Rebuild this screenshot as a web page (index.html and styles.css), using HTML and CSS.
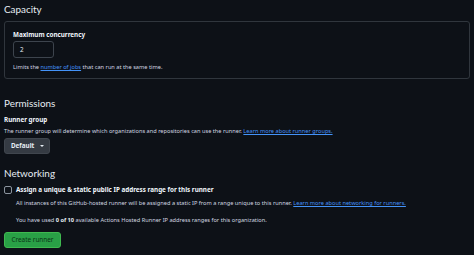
FILE: index.html
```html
<!DOCTYPE html>
<html>
<head>
<meta charset="utf-8">
<link rel="stylesheet" href="styles.css">
</head>
<body>
<div class="page">
  <h2 class="heading">Capacity</h2>
  <div class="box">
    <div class="label">Maximum concurrency</div>
    <div class="input">2</div>
    <div class="note">Limits the <a href="#">number of jobs</a> that can run at the same time.</div>
  </div>

  <h2 class="heading heading-perm">Permissions</h2>
  <div class="label label-rg">Runner group</div>
  <div class="note note-rg">The runner group will determine which organizations and repositories can use the runner. <a href="#">Learn more about runner groups.</a></div>
  <div class="select">Default <span class="caret"></span></div>

  <h2 class="heading heading-net">Networking</h2>
  <div class="check-row">
    <span class="checkbox"></span>
    <div class="check-body">
      <div class="label">Assign a unique &amp; static public IP address range for this runner</div>
      <div class="note note-inst">All instances of this GitHub-hosted runner will be assigned a static IP from a range unique to this runner. <a href="#">Learn more about networking for runners.</a></div>
      <div class="note note-used">You have used <b>0 of 10</b> available Actions Hosted Runner IP address ranges for this organization.</div>
    </div>
  </div>
  <div class="create">Create runner</div>
</div>
</body>
</html>
```

FILE: styles.css
```css
html, body {
  margin: 0;
  padding: 0;
  background: #0d1117;
}
body {
  font-family: "Noto Sans", "Open Sans", sans-serif;
  color: #e6edf3;
}
.page {
  padding: 0 4px;
  display: flex;
  flex-direction: column;
  align-items: flex-start;
}
.heading {
  margin: 0;
  font-family: Lato, "Noto Sans", sans-serif;
  font-size: 9.9px;
  line-height: 18px;
  font-weight: 400;
  color: #e6edf3;
}
.heading-perm { margin-top: 15px; }
.heading-net { margin-top: 10px; }
.box {
  align-self: stretch;
  margin-top: 3px;
  border: 1px solid #30363d;
  border-radius: 3px;
  padding: 8px 8px 7px;
  display: flex;
  flex-direction: column;
  align-items: flex-start;
}
.label {
  font-size: 6.3px;
  line-height: 9px;
  font-weight: 700;
  color: #f0f6fc;
}
.label-rg { margin-top: 2.5px; }
.input {
  margin-top: 2px;
  box-sizing: border-box;
  width: 41px;
  height: 17px;
  border: 1px solid #3d444d;
  border-radius: 3px;
  background: #0d1117;
  font-size: 6.3px;
  line-height: 15px;
  padding-left: 6px;
  color: #e6edf3;
}
.note {
  font-size: 5.65px;
  line-height: 8px;
  color: #d1d7e0;
  white-space: nowrap;
}
.box .note { margin-top: 5px; }
.note a {
  color: #4493f8;
  text-decoration: underline;
}
.note b { font-weight: 700; color: #e6edf3; }
.note-rg { margin-top: 3.5px; }
.select {
  margin-top: 3px;
  box-sizing: border-box;
  width: 46px;
  height: 16px;
  border-radius: 3px;
  background: #353b43;
  border: 1px solid #40464e;
  font-size: 6.3px;
  font-weight: 700;
  line-height: 14px;
  padding-left: 6px;
  display: flex;
  align-items: center;
  gap: 6px;
  color: #e6edf3;
}
.caret {
  width: 0;
  height: 0;
  border-left: 2px solid transparent;
  border-right: 2px solid transparent;
  border-top: 2.5px solid #e6edf3;
}
.check-row {
  margin-top: 3px;
  display: flex;
  gap: 4px;
  align-items: flex-start;
}
.checkbox {
  margin-top: 1px;
  box-sizing: border-box;
  width: 8px;
  height: 8px;
  border: 1px solid #8b949e;
  border-radius: 2px;
  flex: none;
}
.check-body {
  display: flex;
  flex-direction: column;
}
.note-inst { margin-top: 5px; }
.note-used { margin-top: 8.6px; }
.create {
  margin-top: 8px;
  box-sizing: border-box;
  width: 57px;
  height: 16px;
  border-radius: 3px;
  background: #29a046;
  border: 1px solid #3fb950;
  font-size: 6.4px;
  line-height: 14px;
  text-align: center;
  color: #0b3316;
}
```
